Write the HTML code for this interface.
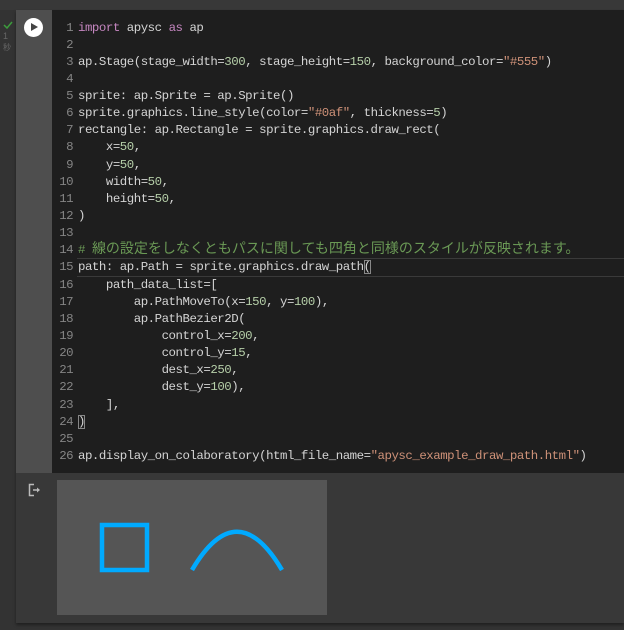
<!DOCTYPE html>
<html><head><meta charset="utf-8"><style>
html,body{margin:0;padding:0;width:624px;height:630px;overflow:hidden;background:#333;}
.top{position:absolute;left:0;top:0;width:624px;height:10px;background:#383838;}
.cell{position:absolute;left:16px;top:10px;width:608px;height:613px;background:#383838;box-shadow:0 2px 3px rgba(0,0,0,.4);}
.gut{position:absolute;left:16px;top:10px;width:36px;height:463px;background:#4e4e4e;}
.code{position:absolute;left:52px;top:10px;width:572px;height:463px;background:#1e1e1e;}
.lines{position:absolute;left:52px;top:19.5px;width:572px;font-family:"Liberation Mono","Noto Sans CJK JP",monospace;font-size:12.4px;letter-spacing:-0.47px;line-height:17.15px;color:#d4d4d4;}
.l{height:17.15px;position:relative;white-space:pre;overflow:visible}
.n{display:inline-block;width:21px;text-align:right;color:#858585;margin-right:5px;letter-spacing:-0.57px}
.k{color:#c586c0}.d{color:#b5cea8}.s{color:#ce9178}.c{color:#6a9955}
.j{font-size:14px;letter-spacing:0;line-height:10px}
.hl{position:absolute;left:25px;right:0;top:-1px;height:17px;border-top:1px solid #3a3a3a;border-bottom:1px solid #3a3a3a}
.b{outline:1px solid #888;outline-offset:-1px}
.run{position:absolute;left:24px;top:18px;width:19px;height:19px;border-radius:50%;background:#fff;}
.run:after{content:"";position:absolute;left:7px;top:5px;border-left:7px solid #444;border-top:4.5px solid transparent;border-bottom:4.5px solid transparent;}
.out{position:absolute;left:57px;top:480px;width:270px;height:135px;background:#555;}
.st{position:absolute;left:3px;font-family:"Liberation Sans","Noto Sans CJK JP",sans-serif;font-size:9px;color:#666;}
</style></head><body>
<div class="top"></div>
<div class="cell"></div>
<div class="gut"></div>
<div class="code"></div>
<div class="run"></div>
<svg style="position:absolute;left:2px;top:20px" width="12" height="10"><path d="M2 5 L5 8 L10 2" stroke="#3c9c3c" stroke-width="1.5" fill="none"/></svg>
<div class="st" style="top:31px">1</div>
<div class="st" style="top:42px;font-size:8px">秒</div>
<div class="lines"><div class="l"><span class="n">1</span><span class="k">import</span> apysc <span class="k">as</span> ap</div><div class="l"><span class="n">2</span></div><div class="l"><span class="n">3</span>ap.Stage(stage_width=<span class="d">300</span>, stage_height=<span class="d">150</span>, background_color=<span class="s">"#555"</span>)</div><div class="l"><span class="n">4</span></div><div class="l"><span class="n">5</span>sprite: ap.Sprite = ap.Sprite()</div><div class="l"><span class="n">6</span>sprite.graphics.line_style(color=<span class="s">"#0af"</span>, thickness=<span class="d">5</span>)</div><div class="l"><span class="n">7</span>rectangle: ap.Rectangle = sprite.graphics.draw_rect(</div><div class="l"><span class="n">8</span>    x=<span class="d">50</span>,</div><div class="l"><span class="n">9</span>    y=<span class="d">50</span>,</div><div class="l"><span class="n">10</span>    width=<span class="d">50</span>,</div><div class="l"><span class="n">11</span>    height=<span class="d">50</span>,</div><div class="l"><span class="n">12</span>)</div><div class="l"><span class="n">13</span></div><div class="l"><span class="n">14</span><span class="c"># <span class="j">線の設定をしなくともパスに関しても四角と同様のスタイルが反映されます。</span></span></div><div class="l"><div class="hl"></div><span class="n">15</span>path: ap.Path = sprite.graphics.draw_path<span class="b">(</span></div><div class="l"><span class="n">16</span>    path_data_list=[</div><div class="l"><span class="n">17</span>        ap.PathMoveTo(x=<span class="d">150</span>, y=<span class="d">100</span>),</div><div class="l"><span class="n">18</span>        ap.PathBezier2D(</div><div class="l"><span class="n">19</span>            control_x=<span class="d">200</span>,</div><div class="l"><span class="n">20</span>            control_y=<span class="d">15</span>,</div><div class="l"><span class="n">21</span>            dest_x=<span class="d">250</span>,</div><div class="l"><span class="n">22</span>            dest_y=<span class="d">100</span>),</div><div class="l"><span class="n">23</span>    ],</div><div class="l"><span class="n">24</span><span class="b">)</span></div><div class="l"><span class="n">25</span></div><div class="l"><span class="n">26</span>ap.display_on_colaboratory(html_file_name=<span class="s">"apysc_example_draw_path.html"</span>)</div></div>
<svg style="position:absolute;left:28px;top:483px" width="14" height="14"><path d="M6 1.5 H1.5 V12.5 H6" stroke="#bbb" stroke-width="1.5" fill="none"/><path d="M5 7 H10" stroke="#bbb" stroke-width="1.5"/><path d="M9 4.5 L12 7 L9 9.5 Z" fill="#bbb"/></svg>
<svg class="out" viewBox="0 0 300 150"><rect x="50" y="50" width="50" height="50" fill="none" stroke="#00aaff" stroke-width="5"/><path d="M150 100 Q200 15 250 100" fill="none" stroke="#00aaff" stroke-width="5"/></svg>
</body></html>
